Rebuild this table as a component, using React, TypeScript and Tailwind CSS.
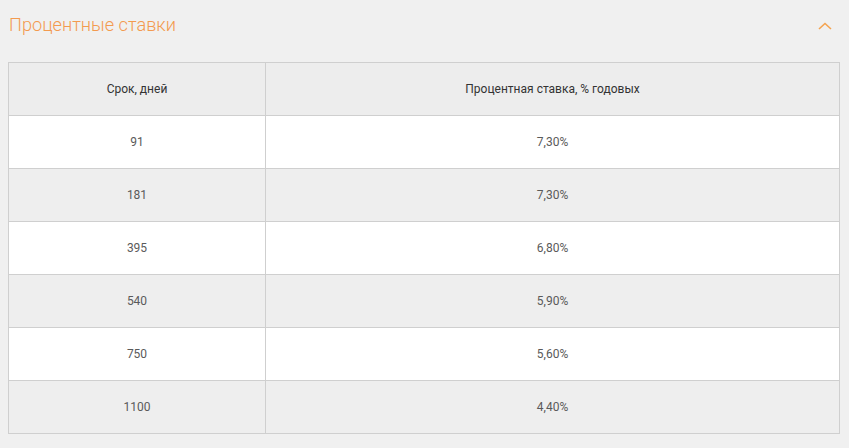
const rows = [
  { term: '91', rate: '7,30%' },
  { term: '181', rate: '7,30%' },
  { term: '395', rate: '6,80%' },
  { term: '540', rate: '5,90%' },
  { term: '750', rate: '5,60%' },
  { term: '1100', rate: '4,40%' },
];

export default function App() {
  return (
    <div className="min-h-[448px] w-[849px] bg-[#f0f0f0] font-['Roboto',sans-serif]">
      <div className="flex h-[50px] items-center justify-between pl-[9px] pr-[17px]">
        <h2 className="text-[18.2px] font-light text-[#f39a4f]">Процентные ставки</h2>
        <svg width="14" height="8" viewBox="0 0 14 8" fill="none" className="mt-[2px]">
          <path d="M1 7L7 1.5L13 7" stroke="#f5a34f" strokeWidth="1.6" />
        </svg>
      </div>
      <div className="pl-[8px] pr-[9px] pt-[12px]">
        <table className="w-[832px] border-collapse text-[12px]">
          <thead>
            <tr className="h-[53px] bg-[#ededed] text-[#333]">
              <th className="w-[257px] border border-[#cfcfcf] font-normal">Срок, дней</th>
              <th className="border border-[#cfcfcf] font-normal">Процентная ставка, % годовых</th>
            </tr>
          </thead>
          <tbody>
            {rows.map((r, i) => (
              <tr key={r.term} className={`h-[53px] text-[#5a5a5a] ${i % 2 === 0 ? 'bg-white' : 'bg-[#eeeeee]'}`}>
                <td className="border border-[#cfcfcf] text-center">{r.term}</td>
                <td className="border border-[#cfcfcf] text-center">{r.rate}</td>
              </tr>
            ))}
          </tbody>
        </table>
      </div>
    </div>
  );
}
